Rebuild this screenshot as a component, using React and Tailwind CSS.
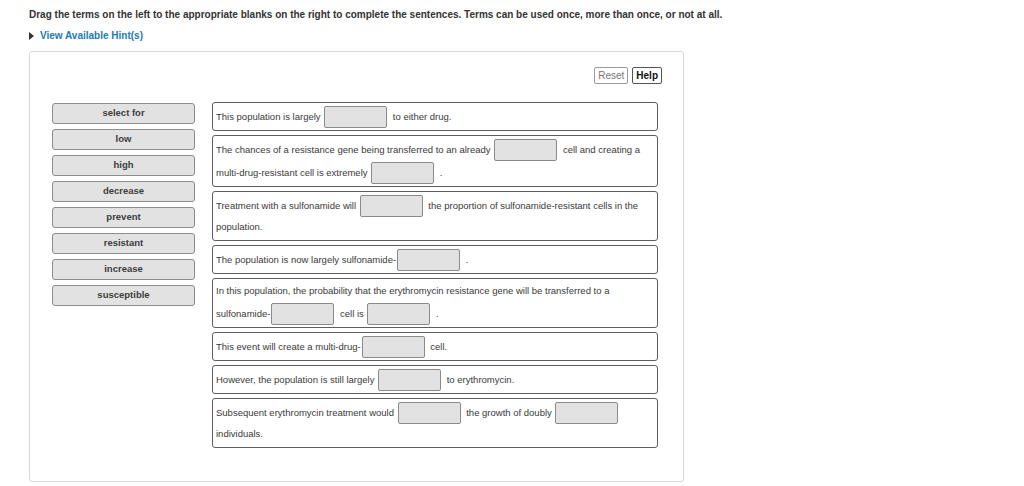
const TERMS = ['select for', 'low', 'high', 'decrease', 'prevent', 'resistant', 'increase', 'susceptible'];

// Each sentence is a list of lines; a line holds text and blank slots (null).
const SENTENCES = [
  [['This population is largely ', null, ' to either drug.']],
  [
    ['The chances of a resistance gene being transferred to an already ', null, ' cell and creating a'],
    ['multi-drug-resistant cell is extremely ', null, ' .'],
  ],
  [
    ['Treatment with a sulfonamide will ', null, ' the proportion of sulfonamide-resistant cells in the'],
    ['population.'],
  ],
  [['The population is now largely sulfonamide-', null, ' .']],
  [
    ['In this population, the probability that the erythromycin resistance gene will be transferred to a'],
    ['sulfonamide-', null, ' cell is ', null, ' .'],
  ],
  [['This event will create a multi-drug-', null, ' cell.']],
  [['However, the population is still largely ', null, ' to erythromycin.']],
  [
    ['Subsequent erythromycin treatment would ', null, ' the growth of doubly ', null],
    ['individuals.'],
  ],
];

function Blank() {
  return (
    <span className="inline-block align-middle w-[63px] h-[22px] ml-[1px] mr-[3px] rounded-[2px] border border-[#8a8a8a] bg-[#e2e2e2]" />
  );
}

function Sentence({ lines }) {
  return (
    <div className="rounded-[3px] border-[1.5px] border-[#5e5e5e] px-[3px] py-[2px]">
      {lines.map((line, i) => {
        const hasBlank = line.some(part => part === null);
        return (
          <div key={i} className={`flex items-center ${hasBlank ? 'h-[23px]' : 'h-[21px]'}`}>
            <span className="whitespace-pre">
              {line.map((part, j) => (part === null ? <Blank key={j} /> : <span key={j}>{part}</span>))}
            </span>
          </div>
        );
      })}
    </div>
  );
}

export default function App() {
  return (
    <div className="min-h-[486px] bg-white pl-[29px] pt-[8px] text-[#333]" style={{ fontFamily: '"Liberation Sans", Arial, sans-serif' }}>
      <p className="text-[10px] font-bold leading-[13px] text-[#333]">
        Drag the terms on the left to the appropriate blanks on the right to complete the sentences. Terms can be used once, more than once, or not at all.
      </p>

      <div className="mt-[7px] flex items-center gap-[6px] text-[10px] font-bold text-[#1d7ab3]">
        <svg width="5" height="8" viewBox="0 0 5 8"><path d="M0 0 L5 4 L0 8 Z" fill="#333" /></svg>
        <span>View Available Hint(s)</span>
      </div>

      <div className="mt-[8px] w-[655px] h-[431px] rounded-[3px] border border-[#d9d9d9] pt-[15px] pl-[22px] pr-[25px]">
        {/* toolbar */}
        <div className="flex justify-end gap-[4px] -mr-[4px]">
          <button className="h-[17px] px-[3px] rounded-[2px] border border-[#9a9a9a] text-[10px] leading-none text-[#777]">Reset</button>
          <button className="h-[17px] px-[3px] rounded-[2px] border border-[#555] text-[10px] font-bold leading-none text-[#111]">Help</button>
        </div>

        <div className="mt-[18px] flex gap-[17px]">
          {/* draggable terms */}
          <div className="mt-[1px] w-[143px] flex flex-col gap-[5px]">
            {TERMS.map(t => (
              <div key={t} className="h-[21px] flex items-center justify-center rounded-[3px] border border-[#8c8c8c] bg-[#e2e2e2] text-[9.5px] font-bold text-[#3d3d3d]">
                {t}
              </div>
            ))}
          </div>

          {/* sentences with drop targets */}
          <div className="flex-1 flex flex-col gap-[4px] text-[9.5px] text-[#3a3a3a]">
            {SENTENCES.map((lines, i) => <Sentence key={i} lines={lines} />)}
          </div>
        </div>
      </div>
    </div>
  );
}
